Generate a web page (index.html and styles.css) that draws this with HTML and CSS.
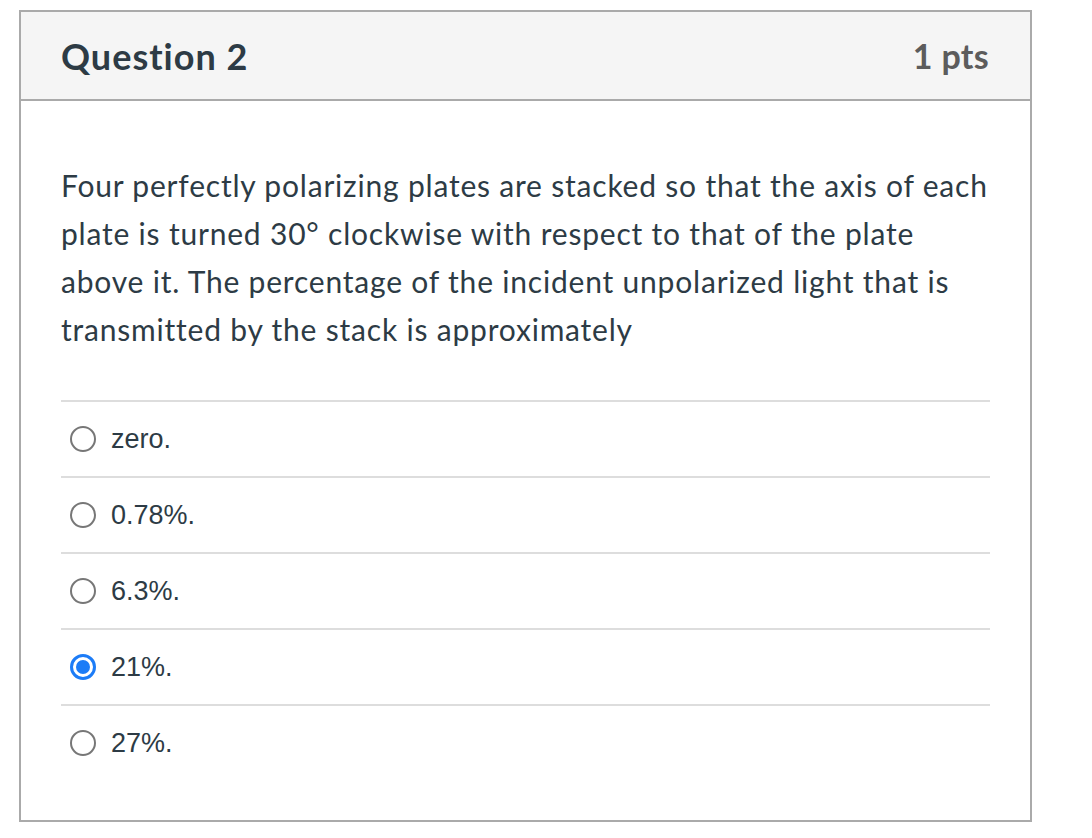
FILE: index.html
```html
<!DOCTYPE html>
<html>
<head>
<meta charset="utf-8">
<link rel="stylesheet" href="styles.css">
</head>
<body>
<div class="question">
  <div class="header">
    <h2 class="title">Question 2</h2>
    <span class="points">1 pts</span>
  </div>
  <div class="content">
    <p class="text">Four perfectly polarizing plates are stacked so that the axis of each plate is turned 30° clockwise with respect to that of the plate above it. The percentage of the incident unpolarized light that is transmitted by the stack is approximately</p>
    <div class="answers">
      <label class="answer"><span class="radio"></span><span class="label">zero.</span></label>
      <label class="answer"><span class="radio"></span><span class="label">0.78%.</span></label>
      <label class="answer"><span class="radio"></span><span class="label">6.3%.</span></label>
      <label class="answer"><span class="radio checked"></span><span class="label">21%.</span></label>
      <label class="answer"><span class="radio"></span><span class="label">27%.</span></label>
    </div>
  </div>
</div>
</body>
</html>
```
FILE: styles.css
```css
html, body {
  margin: 0;
  padding: 0;
  background: #fff;
}
body {
  padding: 10px 0 0 19px;
  font-family: Lato, "Noto Sans", sans-serif;
  color: #2d3b45;
}
.question {
  width: 1009px;
  height: 808px;
  border: 2px solid #aaaaaa;
  display: flex;
  flex-direction: column;
}
.header {
  background: #f5f5f5;
  height: 87px;
  border-bottom: 2px solid #aaaaaa;
  display: flex;
  align-items: center;
  justify-content: space-between;
  padding: 0 41px 0 40px;
}
.title {
  margin: 0;
  font-size: 36px;
  letter-spacing: 1px;
  font-weight: 700;
  color: #2d3b45;
}
.points {
  font-size: 34px;
  letter-spacing: 0.3px;
  font-weight: 700;
  color: #5c5c5c;
}
.content {
  padding: 60px 40px 0 40px;
}
.text {
  margin: 0;
  font-size: 30px;
  letter-spacing: 0.8px;
  line-height: 48px;
}
.answers {
  margin-top: 47px;
}
.answer {
  display: flex;
  align-items: center;
  height: 74px;
  border-top: 2px solid #dddddd;
}
.radio {
  width: 22px;
  height: 22px;
  border: 2px solid #777777;
  border-radius: 50%;
  margin-left: 9px;
  box-sizing: content-box;
  flex: none;
  position: relative;
}
.radio.checked {
  border: 3px solid #1c7cf7;
  width: 20px;
  height: 20px;
}
.radio.checked::after {
  content: "";
  position: absolute;
  left: 3px;
  top: 3px;
  width: 14px;
  height: 14px;
  border-radius: 50%;
  background: #1c7cf7;
}
.label {
  margin-left: 15px;
  font-family: "Liberation Sans", Arial, sans-serif;
  font-size: 27px;
  color: #2d3b45;
}
```
